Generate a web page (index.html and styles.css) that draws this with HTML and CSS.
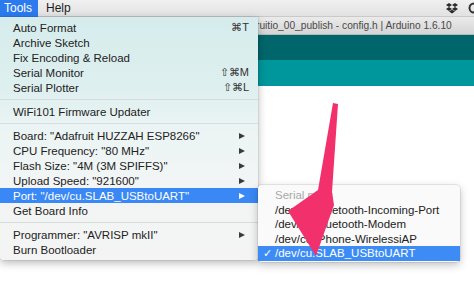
FILE: index.html
```html
<!DOCTYPE html>
<html lang="en">
<head>
    <meta charset="UTF-8">
    <title>Arduino - Tools menu</title>
    <link rel="stylesheet" href="styles.css">
</head>
<body>

    <!-- macOS menu bar -->
    <div class="menubar">
        <span class="menubar-item active">Tools</span>
        <span class="menubar-item">Help</span>
        <span class="menubar-spacer"></span>
        <svg class="tray-icon" width="12" height="11" viewBox="0 0 12 11">
            <path d="M3 0 L6 2 L3 4 L0 2 Z M9 0 L12 2 L9 4 L6 2 Z M0 6 L3 4 L6 6 L3 8 Z M6 6 L9 4 L12 6 L9 8 Z M3 8.6 L6 6.8 L9 8.6 L6 10.5 Z" fill="#2b2b2b"/>
        </svg>
        <svg class="tray-icon last" width="10" height="12" viewBox="0 0 10 12">
            <circle cx="6" cy="6" r="4.5" fill="none" stroke="#333" stroke-width="2"/>
        </svg>
    </div>

    <!-- Arduino IDE window behind the menu -->
    <div class="window">
        <div class="titlebar">
            <span class="title">ruitio_00_publish - config.h | Arduino 1.6.10</span>
        </div>
        <div class="toolbar"></div>
        <div class="tabs"></div>
        <div class="editor"></div>
    </div>

    <!-- Tools menu -->
    <div class="menu">
        <div class="menu-item"><span class="label">Auto Format</span><span class="shortcut">⌘T</span></div>
        <div class="menu-item"><span class="label">Archive Sketch</span></div>
        <div class="menu-item"><span class="label">Fix Encoding &amp; Reload</span></div>
        <div class="menu-item"><span class="label">Serial Monitor</span><span class="shortcut">⇧⌘M</span></div>
        <div class="menu-item"><span class="label">Serial Plotter</span><span class="shortcut">⇧⌘L</span></div>
        <div class="separator"></div>
        <div class="menu-item"><span class="label">WiFi101 Firmware Updater</span></div>
        <div class="separator"></div>
        <div class="menu-item"><span class="label">Board: "Adafruit HUZZAH ESP8266"</span><span class="submenu-arrow"></span></div>
        <div class="menu-item"><span class="label">CPU Frequency: "80 MHz"</span><span class="submenu-arrow"></span></div>
        <div class="menu-item"><span class="label">Flash Size: "4M (3M SPIFFS)"</span><span class="submenu-arrow"></span></div>
        <div class="menu-item"><span class="label">Upload Speed: "921600"</span><span class="submenu-arrow"></span></div>
        <div class="menu-item selected"><span class="label">Port: "/dev/cu.SLAB_USBtoUART"</span><span class="submenu-arrow"></span></div>
        <div class="menu-item"><span class="label">Get Board Info</span></div>
        <div class="separator"></div>
        <div class="menu-item"><span class="label">Programmer: "AVRISP mkII"</span><span class="submenu-arrow"></span></div>
        <div class="menu-item"><span class="label">Burn Bootloader</span></div>
    </div>

    <!-- Port submenu -->
    <div class="submenu">
        <div class="sub-item header">Serial ports</div>
        <div class="sub-item">/dev/cu.Bluetooth-Incoming-Port</div>
        <div class="sub-item">/dev/cu.Bluetooth-Modem</div>
        <div class="sub-item">/dev/cu.iPhone-WirelessiAP</div>
        <div class="sub-item selected"><span class="check">✓</span>/dev/cu.SLAB_USBtoUART</div>
    </div>

    <!-- annotation arrow -->
    <svg class="annotation" width="474" height="283" viewBox="0 0 474 283">
        <polygon points="333,103 338,104 332,192 334,205 316,256 288,211 318,190" fill="#f2316c"/>
    </svg>

</body>
</html>
```

FILE: styles.css
```css
* {
    margin: 0;
    padding: 0;
    box-sizing: border-box;
}

body {
    width: 474px;
    height: 283px;
    overflow: hidden;
    position: relative;
    background-color: #fff;
    font-family: 'Liberation Sans', Arial, sans-serif;
    color: #222;
}

/* menu bar */

.menubar {
    height: 17px;
    display: flex;
    align-items: center;
    background: linear-gradient(#f0f0f0, #e2e2e2);
    border-bottom: 1px solid #c9c9c9;
    font-size: 12px;
}

.menubar-item {
    height: 17px;
    line-height: 17px;
    padding: 0 8px;
    color: #1e1e1e;
}

.menubar-item.active {
    background-color: #2b7bef;
    color: #fff;
    padding: 0 0 0 4px;
    width: 38px;
}

.menubar-spacer {
    flex: 1;
}

.tray-icon {
    margin-right: 10px;
}

.tray-icon.last {
    margin-right: -4px;
}

/* window */

.titlebar {
    height: 18px;
    background: linear-gradient(#ebebeb, #d5d5d5);
    border-bottom: 1px solid #b8b8b8;
    padding-left: 256px;
    display: flex;
    align-items: center;
}

.title {
    font-size: 10.2px;
    color: #4a4a4a;
    white-space: nowrap;
}

.toolbar {
    height: 25px;
    background-color: #00666b;
}

.tabs {
    height: 26px;
    background-color: #00979c;
}

.editor {
    height: 197px;
    background-color: #fff;
}

/* tools menu */

.menu {
    position: absolute;
    left: 0;
    top: 17px;
    width: 258px;
    padding: 3px 0;
    background: linear-gradient(#d6ecec 0px, #deefef 70px, #ebf4f4 110px, #f2f5f5 170px, #f4f4f4 100%);
    box-shadow: 0 3px 9px rgba(0, 0, 0, 0.28), 0 0 0 1px rgba(0, 0, 0, 0.06);
    border-radius: 0 0 4px 4px;
    font-size: 11.5px;
}

.menu-item {
    height: 15px;
    display: flex;
    align-items: center;
    padding: 0 9px 0 13px;
    white-space: nowrap;
}

.menu-item .label {
    flex: 1;
}

.menu-item .shortcut {
    font-size: 11px;
    color: #333;
}

.menu-item.selected {
    background-color: #3a88f5;
    color: #fff;
}

.submenu-arrow {
    width: 0;
    height: 0;
    margin-right: 4px;
    border-top: 3.5px solid transparent;
    border-bottom: 3.5px solid transparent;
    border-left: 6px solid #3a3a3a;
}

.menu-item.selected .submenu-arrow {
    border-left-color: #fff;
}

.separator {
    height: 9px;
    display: flex;
    align-items: center;
}

.separator::after {
    content: "";
    flex: 1;
    height: 1px;
    background-color: #d6dcdc;
}

/* port submenu */

.submenu {
    position: absolute;
    left: 258px;
    top: 185px;
    width: 202px;
    padding: 3px 0 1px;
    background-color: #fafafa;
    border-radius: 4px;
    box-shadow: 0 3px 9px rgba(0, 0, 0, 0.25), 0 0 0 1px rgba(0, 0, 0, 0.07);
    font-size: 11.5px;
}

.sub-item {
    height: 14.5px;
    display: flex;
    align-items: center;
    padding-left: 17px;
    white-space: nowrap;
    position: relative;
}

.sub-item.header {
    color: #a9a9a9;
}

.sub-item.selected {
    background-color: #3d8cf6;
    color: #fff;
}

.check {
    position: absolute;
    left: 5px;
    font-size: 11px;
}

/* annotation */

.annotation {
    position: absolute;
    left: 0;
    top: 0;
}
```
